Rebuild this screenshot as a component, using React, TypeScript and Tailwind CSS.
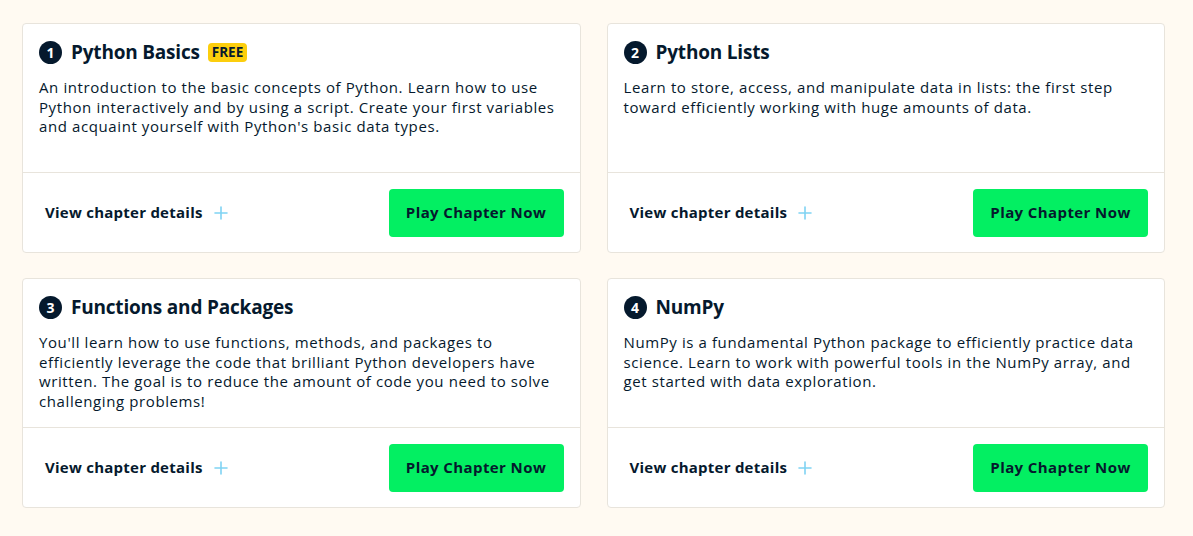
import React from 'react';

type Chapter = {
  num: number;
  title: string;
  free?: boolean;
  description: string;
};

const chapters: Chapter[] = [
  {
    num: 1,
    title: 'Python Basics',
    free: true,
    description:
      "An introduction to the basic concepts of Python. Learn how to use Python interactively and by using a script. Create your first variables and acquaint yourself with Python's basic data types.",
  },
  {
    num: 2,
    title: 'Python Lists',
    description:
      'Learn to store, access, and manipulate data in lists: the first step toward efficiently working with huge amounts of data.',
  },
  {
    num: 3,
    title: 'Functions and Packages',
    description:
      "You'll learn how to use functions, methods, and packages to efficiently leverage the code that brilliant Python developers have written. The goal is to reduce the amount of code you need to solve challenging problems!",
  },
  {
    num: 4,
    title: 'NumPy',
    description:
      'NumPy is a fundamental Python package to efficiently practice data science. Learn to work with powerful tools in the NumPy array, and get started with data exploration.',
  },
];

const PlusIcon = () => (
  <svg width="14" height="14" viewBox="0 0 14 14" className="text-[#7fd3f3]">
    <path d="M7 1v12M1 7h12" stroke="currentColor" strokeWidth="1.6" strokeLinecap="round" />
  </svg>
);

const ChapterCard: React.FC<{ chapter: Chapter }> = ({ chapter }) => (
  <div className="flex h-[230px] flex-col rounded-[4px] border border-[#e8e4dc] bg-white">
    <div className="h-[149px] border-b border-[#e8e4dc] px-[16px] pt-[16px]">
      <div className="flex h-[24px] items-center">
        <span className="flex h-[23px] w-[23px] items-center justify-center rounded-full bg-[#05192d] text-[14px] font-bold text-white">
          {chapter.num}
        </span>
        <h3 className="ml-[9px] text-[19px] font-bold tracking-[-0.2px] text-[#05192d]">{chapter.title}</h3>
        {chapter.free && (
          <span className="ml-[8px] rounded-[4px] bg-[#fcce0d] px-[4px] text-[13.5px] leading-[19px] font-bold text-[#05192d]">
            FREE
          </span>
        )}
      </div>
      <p className="mt-[14px] text-[15px] leading-[19.7px] tracking-[0.6px] text-[#05192d]">
        {chapter.description}
      </p>
    </div>
    <div className="flex flex-1 items-center justify-between pl-[22px] pr-[16px]">
      <button className="flex items-center gap-[11px] text-[15px] font-bold tracking-[0.25px] text-[#05192d]">
        View chapter details
        <PlusIcon />
      </button>
      <button className="h-[48px] w-[175px] rounded-[4px] bg-[#03ef62] text-[15px] font-bold tracking-[0.4px] text-[#05192d]">
        Play Chapter Now
      </button>
    </div>
  </div>
);

export default function App() {
  return (
    <div
      className="min-h-[536px] bg-[#fffaf2] px-[22px] pt-[23px]"
      style={{ fontFamily: '"Open Sans", "Noto Sans", sans-serif' }}
    >
      <div className="grid w-[1143px] grid-cols-2 gap-x-[26px] gap-y-[25px]">
        {chapters.map((c) => (
          <ChapterCard key={c.num} chapter={c} />
        ))}
      </div>
    </div>
  );
}
